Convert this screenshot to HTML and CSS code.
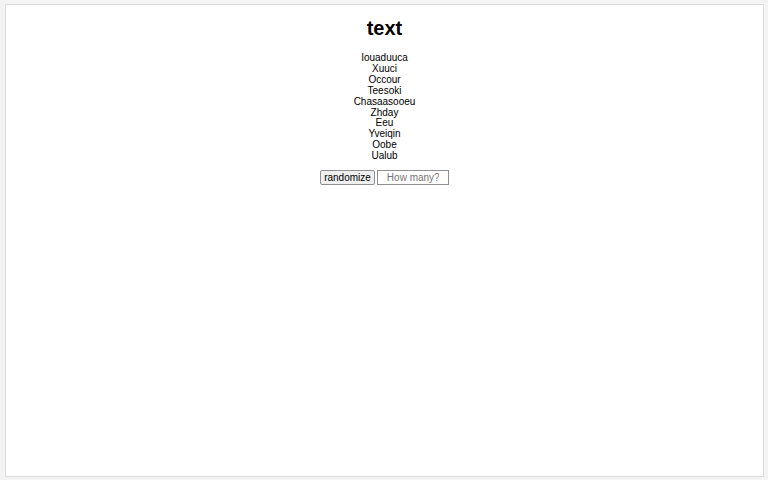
FILE: index.html
```html
<!DOCTYPE html>
<html>
<head>
<meta charset="utf-8">
<link rel="stylesheet" href="styles.css">
</head>
<body>
<div class="frame">
  <h1 class="title">text</h1>
  <ul class="names">
    <li>Iouaduuca</li>
    <li>Xuuci</li>
    <li>Occour</li>
    <li>Teesoki</li>
    <li>Chasaasooeu</li>
    <li>Zhday</li>
    <li>Eeu</li>
    <li>Yveiqin</li>
    <li>Oobe</li>
    <li>Ualub</li>
  </ul>
  <div class="controls">
    <button class="btn">randomize</button>
    <input class="count" type="text" placeholder="How many?">
  </div>
</div>
</body>
</html>
```
FILE: styles.css
```css
html, body {
  margin: 0;
  padding: 0;
  background: #f3f3f3;
  height: 100%;
}
body {
  padding: 4px 4px 3px 5px;
  box-sizing: border-box;
  font-family: "Liberation Sans", Arial, sans-serif;
}
.frame {
  background: #fff;
  border: 1px solid #dcdcdc;
  height: 100%;
  box-sizing: border-box;
  text-align: center;
}
.title {
  margin: 0;
  padding-top: 12px;
  font-size: 20px;
  line-height: 23px;
  font-weight: bold;
  color: #000;
}
.names {
  list-style: none;
  margin: 13px 0 0;
  padding: 0;
  font-size: 10px;
  line-height: 10.9px;
  color: #000;
}
.controls {
  margin-top: 8px;
  display: flex;
  justify-content: center;
  gap: 2px;
}
.btn {
  font-family: "Liberation Sans", Arial, sans-serif;
  font-size: 10px;
  height: 15px;
  padding: 0 3px;
  margin: 0;
  background: #efefef;
  border: 1px solid #8f8f8f;
  border-radius: 2px;
  color: #000;
}
.count {
  font-family: "Liberation Sans", Arial, sans-serif;
  font-size: 10px;
  width: 72px;
  height: 15px;
  box-sizing: border-box;
  padding: 0 9px;
  margin: 0;
  border: 1px solid #8f8f8f;
  color: #000;
}
.count::placeholder {
  color: #757575;
}
```
